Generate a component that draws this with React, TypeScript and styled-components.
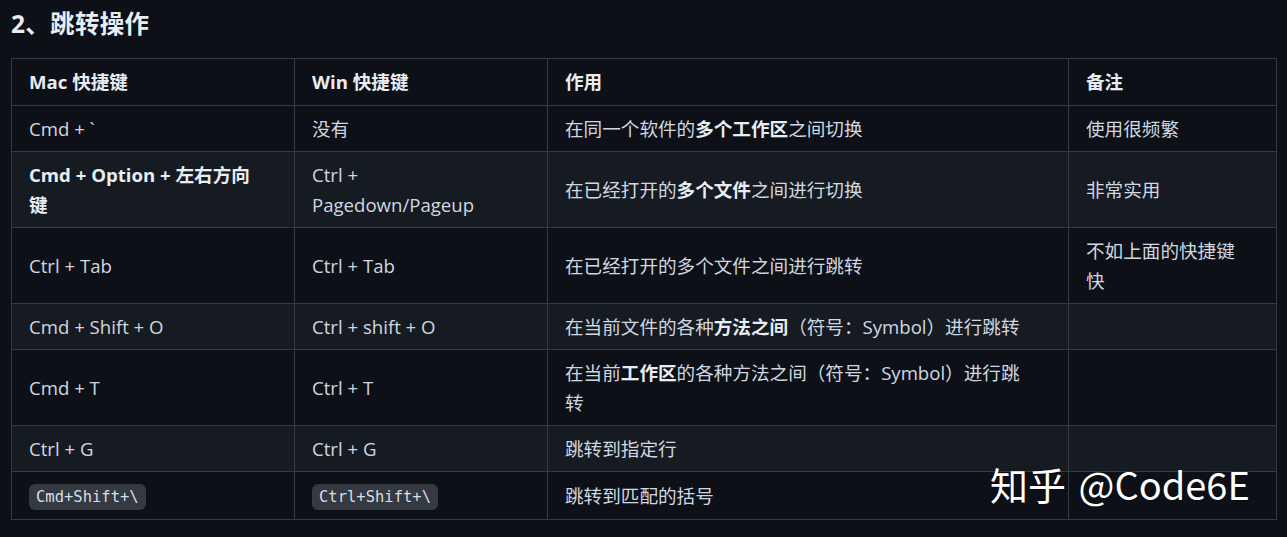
import React from "react";
import styled, { createGlobalStyle } from "styled-components";

const GlobalStyle = createGlobalStyle`
  html, body {
    margin: 0;
    padding: 0;
    background: #0d1117;
  }
  body {
    font-family: "Open Sans", "Noto Sans CJK SC", sans-serif;
    color: #d1d7e0;
  }
`;

const Page = styled.div`
  position: relative;
  width: 1287px;
  height: 537px;
  padding: 7px 0 0 11px;
  box-sizing: border-box;
  overflow: hidden;
`;

const Heading = styled.h2`
  margin: 0 0 17px;
  font-size: 24.5px;
  line-height: 34px;
  font-weight: 700;
  color: #e6edf3;
  letter-spacing: 0.3px;
`;

const Table = styled.table`
  border-collapse: collapse;
  table-layout: fixed;
  width: 1265px;
  font-size: 18.6px;
  line-height: 30px;
`;

const Row = styled.tr<{ $alt?: boolean }>`
  background: ${(p) => (p.$alt ? "#161b22" : "#0d1117")};
`;

const Th = styled.th`
  text-align: left;
  font-weight: 700;
  color: #e6edf3;
  padding: 8px 16px 8px 17px;
  border: 1px solid #353b43;
`;

const Td = styled.td`
  padding: 8px 16px 7px 17px;
  border: 1px solid #353b43;
  vertical-align: middle;
  word-break: break-word;
`;

const Strong = styled.b`
  font-weight: 700;
  color: #e6edf3;
`;

const Code = styled.code`
  font-family: "DejaVu Sans Mono", "Liberation Mono", monospace;
  font-size: 15.5px;
  padding: 4px 7px;
  border-radius: 6px;
  background: #343942;
  color: #d9dee5;
`;

const Watermark = styled.div`
  position: absolute;
  left: 990px;
  top: 460px;
  font-size: 38px;
  line-height: 48px;
  color: #ffffff;
  font-family: "Noto Sans CJK SC", "Open Sans", sans-serif;
  word-spacing: 4px;
  text-shadow: 0 0 2px rgba(0, 0, 0, 0.6);
  white-space: nowrap;
`;

type Shortcut = {
  mac: React.ReactNode;
  win: React.ReactNode;
  use: React.ReactNode;
  note: React.ReactNode;
};

const rows: Shortcut[] = [
  {
    mac: "Cmd + `",
    win: "没有",
    use: (
      <>
        在同一个软件的<Strong>多个工作区</Strong>之间切换
      </>
    ),
    note: "使用很频繁",
  },
  {
    mac: (
      <Strong>
        Cmd + Option + 左右方向
        <br />键
      </Strong>
    ),
    win: (
      <>
        Ctrl +
        <br />
        Pagedown/Pageup
      </>
    ),
    use: (
      <>
        在已经打开的<Strong>多个文件</Strong>之间进行切换
      </>
    ),
    note: "非常实用",
  },
  {
    mac: "Ctrl + Tab",
    win: "Ctrl + Tab",
    use: "在已经打开的多个文件之间进行跳转",
    note: (
      <>
        不如上面的快捷键
        <br />快
      </>
    ),
  },
  {
    mac: "Cmd + Shift + O",
    win: "Ctrl + shift + O",
    use: (
      <>
        在当前文件的各种<Strong>方法之间</Strong>（符号：Symbol）进行跳转
      </>
    ),
    note: "",
  },
  {
    mac: "Cmd + T",
    win: "Ctrl + T",
    use: (
      <>
        在当前<Strong>工作区</Strong>的各种方法之间（符号：Symbol）进行跳
        <br />转
      </>
    ),
    note: "",
  },
  {
    mac: "Ctrl + G",
    win: "Ctrl + G",
    use: "跳转到指定行",
    note: "",
  },
  {
    mac: <Code>Cmd+Shift+\</Code>,
    win: <Code>Ctrl+Shift+\</Code>,
    use: "跳转到匹配的括号",
    note: "",
  },
];

const App: React.FC = () => {
  return (
    <>
      <GlobalStyle />
      <Page>
        <Heading>2、跳转操作</Heading>
        <Table>
          <colgroup>
            <col style={{ width: 283 }} />
            <col style={{ width: 253 }} />
            <col style={{ width: 521 }} />
            <col style={{ width: 208 }} />
          </colgroup>
          <thead>
            <Row>
              <Th>Mac 快捷键</Th>
              <Th>Win 快捷键</Th>
              <Th>作用</Th>
              <Th>备注</Th>
            </Row>
          </thead>
          <tbody>
            {rows.map((r, i) => (
              <Row key={i} $alt={i % 2 === 1}>
                <Td>{r.mac}</Td>
                <Td>{r.win}</Td>
                <Td>{r.use}</Td>
                <Td>{r.note}</Td>
              </Row>
            ))}
          </tbody>
        </Table>
        <Watermark>知乎 @Code6E</Watermark>
      </Page>
    </>
  );
};

export default App;
